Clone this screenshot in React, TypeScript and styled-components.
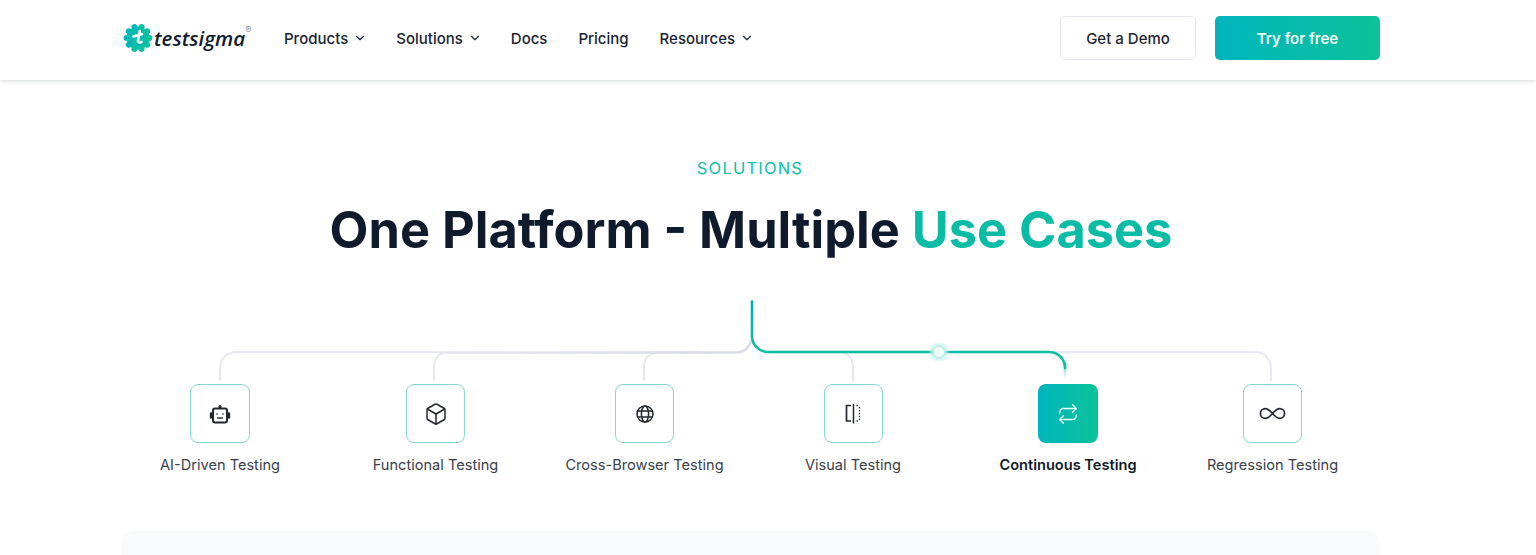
import React from "react";
import styled, { createGlobalStyle } from "styled-components";
import { ChevronDown, Box, Repeat, Infinity as InfinityIcon } from "lucide-react";

const GlobalStyle = createGlobalStyle`
  html, body {
    margin: 0;
    height: 555px;
    overflow: hidden;
    background: #fff;
    font-family: Inter, "Liberation Sans", sans-serif;
    color: #0f1b2d;
  }
`;

const Header = styled.header`
  height: 80px;
  box-sizing: border-box;
  padding: 16px 156px 0 123px;
  display: flex;
  align-items: flex-start;
  background: #fff;
  box-shadow: 0 1px 5px rgba(30, 40, 60, 0.18);
`;

const Logo = styled.a`
  width: 161px;
  height: 44px;
  display: flex;
  align-items: center;
  flex-shrink: 0;
`;

const LogoText = styled.span`
  font-family: "Open Sans", sans-serif;
  font-style: italic;
  font-weight: 600;
  font-size: 20.5px;
  color: #101c2e;
  margin-left: 1px;
  margin-top: -1px;
`;

const Registered = styled.span`
  align-self: flex-start;
  margin: 8px 0 0 0;
  font-size: 9px;
  color: #8a919c;
`;

const Nav = styled.nav`
  display: flex;
  align-items: center;
  gap: 31px;
  height: 44px;
  flex: 1;
`;

const NavItem = styled.a`
  display: flex;
  align-items: center;
  gap: 5px;
  font-size: 15px;
  font-weight: 500;
  color: #1a2333;

  svg {
    margin-right: -2px;
  }
`;

const Actions = styled.div`
  display: flex;
  gap: 19px;
`;

const DemoButton = styled.button`
  width: 136px;
  height: 44px;
  border: 1px solid #e4e5ee;
  border-radius: 5px;
  background: #fff;
  font: 500 15px Inter, sans-serif;
  color: #1f2530;
`;

const TryButton = styled.button`
  width: 165px;
  height: 44px;
  border: 0;
  border-radius: 5px;
  background: linear-gradient(90deg, #00b5bd, #0bc299);
  font: 600 15px Inter, sans-serif;
  color: #f2fffb;
`;

const Section = styled.main`
  padding: 0 156px 0 122px;
  display: flex;
  flex-direction: column;
`;

const Eyebrow = styled.div`
  margin-top: 78px;
  height: 20px;
  line-height: 20px;
  text-align: center;
  font-size: 16.5px;
  letter-spacing: 1.2px;
  color: #0bbfa5;
  padding-right: 2px;
`;

const Title = styled.h1`
  margin: 22px 0 0;
  height: 60px;
  line-height: 60px;
  text-align: center;
  font-size: 50.5px;
  font-weight: 700;
  color: #0f1b2d;
`;

const Accent = styled.span`
  color: #0abca6;
`;

const Tree = styled.svg`
  display: block;
  margin-top: 40px;
  flex-shrink: 0;
`;

const Tabs = styled.div`
  display: grid;
  grid-template-columns: 196px 235px 183px 234px 196px 213px;
`;

const Tab = styled.div`
  display: flex;
  flex-direction: column;
  align-items: center;
`;

const IconBox = styled.div<{ $active?: boolean; $wide?: boolean }>`
  width: ${(p) => (p.$wide ? "60px" : "59px")};
  height: 59px;
  box-sizing: border-box;
  display: flex;
  align-items: center;
  justify-content: center;
  border-radius: 8px;
  border: ${(p) => (p.$active ? "0" : "1px solid #86d9cd")};
  background: ${(p) =>
    p.$active ? "linear-gradient(90deg, #00b5bd, #0bc299)" : "#fff"};
  color: ${(p) => (p.$active ? "#e6fff8" : "#23272f")};
`;

const TabLabel = styled.div<{ $active?: boolean }>`
  margin-top: 13px;
  line-height: 18px;
  font-size: 14.6px;
  white-space: nowrap;
  font-weight: ${(p) => (p.$active ? 600 : 400)};
  color: ${(p) => (p.$active ? "#111a28" : "#3a404c")};
`;

const Panel = styled.div`
  width: 1258px;
  height: 24px;
  margin-top: 57px;
  border-radius: 12px 12px 0 0;
  background: #f9fafb;
`;

const LogoMark = () => (
  <svg width="30" height="30" viewBox="0 0 30 30">
    <circle cx="15" cy="15" r="11.500" fill="#0abcab" />
    {Array.from({ length: 10 }, (_, i) => i * 36).map((a) => (
      <circle
        key={a}
        cx="15"
        cy="3.600"
        r="3"
        fill={a > 180 ? "#00b8b8" : "#0bc29e"}
        transform={`rotate(${a + 18} 15 15)`}
      />
    ))}
    <path
      d="M16.800 8 15 17.500c-.3 2 1.400 2.600 3.500 1.300M10.500 13.500l8.500-2.500"
      fill="none"
      stroke="#fff"
      strokeWidth="2.600"
      strokeLinecap="round"
    />
  </svg>
);

const RobotIcon = () => (
  <svg width="22" height="22" viewBox="0 0 22 22" fill="none" stroke="currentColor">
    <rect x="4" y="5.500" width="14" height="14" rx="2" strokeWidth="2" />
    <circle cx="11" cy="3.800" r="1.700" fill="currentColor" stroke="none" />
    <path d="M2 10.500v4M20 10.500v4" strokeWidth="2.400" strokeLinecap="round" />
    <path d="M8 10.500v1M14 10.500v1" strokeWidth="1.800" />
    <path d="M8 15h6" strokeWidth="1.400" />
  </svg>
);

const GlobeIcon = () => (
  <svg width="20" height="20" viewBox="0 0 20 20" fill="none" stroke="currentColor" strokeWidth="1.500">
    <circle cx="10" cy="10" r="8" />
    <ellipse cx="10" cy="10" rx="3.600" ry="8" />
    <path d="M2.800 7h14.400M2.800 13h14.400" />
  </svg>
);

const CompareIcon = () => (
  <svg width="20" height="22" viewBox="0 0 20 22" fill="none" stroke="currentColor">
    <path d="M8 2.500H3.500v15.500H8" strokeWidth="1.700" />
    <path d="M10.500 1v19.500" strokeWidth="1.500" />
    <path d="M13.500 2.500h3M13.500 18h3M16.500 4v13" strokeWidth="1.300" strokeDasharray="1.400 1.500" />
  </svg>
);

const tabs = [
  { label: "AI-Driven Testing", icon: <RobotIcon />, wide: true },
  { label: "Functional Testing", icon: <Box size={24} strokeWidth={1.500} /> },
  { label: "Cross-Browser Testing", icon: <GlobeIcon /> },
  { label: "Visual Testing", icon: <CompareIcon /> },
  { label: "Continuous Testing", icon: <Repeat size={22} strokeWidth={1.600} />, active: true, wide: true },
  { label: "Regression Testing", icon: <InfinityIcon size={29} strokeWidth={1.400} /> },
];

const ConnectorTree = () => (
  <Tree width="1258" height="84" viewBox="122 300 1258 84" fill="none" strokeLinecap="round">
    <defs>
      <linearGradient id="stemTop" gradientUnits="userSpaceOnUse" x1="0" y1="301" x2="0" y2="345">
        <stop offset="0" stopColor="#00aebb" />
        <stop offset="1" stopColor="#0bbf9f" />
      </linearGradient>
      <linearGradient id="stemEnd" gradientUnits="userSpaceOnUse" x1="0" y1="358" x2="0" y2="378">
        <stop offset="0" stopColor="#0bbfa0" />
        <stop offset="1" stopColor="#0bbfa0" stopOpacity="0" />
      </linearGradient>
      <linearGradient id="darkGrey" gradientUnits="userSpaceOnUse" x1="440" y1="0" x2="700" y2="0">
        <stop offset="0" stopColor="#e6e8ef" />
        <stop offset="1" stopColor="#d9dbe6" />
      </linearGradient>
      <radialGradient id="halo">
        <stop offset="0.500" stopColor="#bdeee7" />
        <stop offset="1" stopColor="#bdeee7" stopOpacity="0" />
      </radialGradient>
    </defs>
    <g stroke="#e6e8ef" strokeWidth="2">
      <path d="M220 380V368a16 16 0 0 1 16-16H440" />
      <path d="M434 380V366a14 14 0 0 1 14-14" />
      <path d="M644 380V366a14 14 0 0 1 14-14H700" />
      <path d="M853 380V366a14 14 0 0 0-14-14" />
      <path d="M1050 352H1255a16 16 0 0 1 16 16V380" />
    </g>
    <path d="M440 352.500H736a15 15 0 0 0 15-12" stroke="url(#darkGrey)" strokeWidth="2.500" />
    <path d="M752 301.500V336" stroke="url(#stemTop)" strokeWidth="2.600" />
    <path d="M752 336a16 16 0 0 0 16 16H1049a16 16 0 0 1 16 16" stroke="#0abf9f" strokeWidth="2.600" />
    <path d="M1065 362V378" stroke="url(#stemEnd)" strokeWidth="2.600" strokeLinecap="butt" />
    <circle cx="939" cy="352" r="11" fill="url(#halo)" />
    <circle cx="939" cy="352" r="5" fill="#eefbf9" />
  </Tree>
);

export default function App() {
  return (
    <>
      <GlobalStyle />
      <Header>
        <Logo>
          <LogoMark />
          <LogoText>testsigma</LogoText>
          <Registered>®</Registered>
        </Logo>
        <Nav>
          <NavItem>Products <ChevronDown size={14} strokeWidth={2} /></NavItem>
          <NavItem>Solutions <ChevronDown size={14} strokeWidth={2} /></NavItem>
          <NavItem>Docs</NavItem>
          <NavItem>Pricing</NavItem>
          <NavItem>Resources <ChevronDown size={14} strokeWidth={2} /></NavItem>
        </Nav>
        <Actions>
          <DemoButton>Get a Demo</DemoButton>
          <TryButton>Try for free</TryButton>
        </Actions>
      </Header>
      <Section>
        <Eyebrow>SOLUTIONS</Eyebrow>
        <Title>
          One Platform - Multiple <Accent>Use Cases</Accent>
        </Title>
        <ConnectorTree />
        <Tabs>
          {tabs.map((t) => (
            <Tab key={t.label}>
              <IconBox $active={t.active} $wide={t.wide}>{t.icon}</IconBox>
              <TabLabel $active={t.active}>{t.label}</TabLabel>
            </Tab>
          ))}
        </Tabs>
        <Panel />
      </Section>
    </>
  );
}
